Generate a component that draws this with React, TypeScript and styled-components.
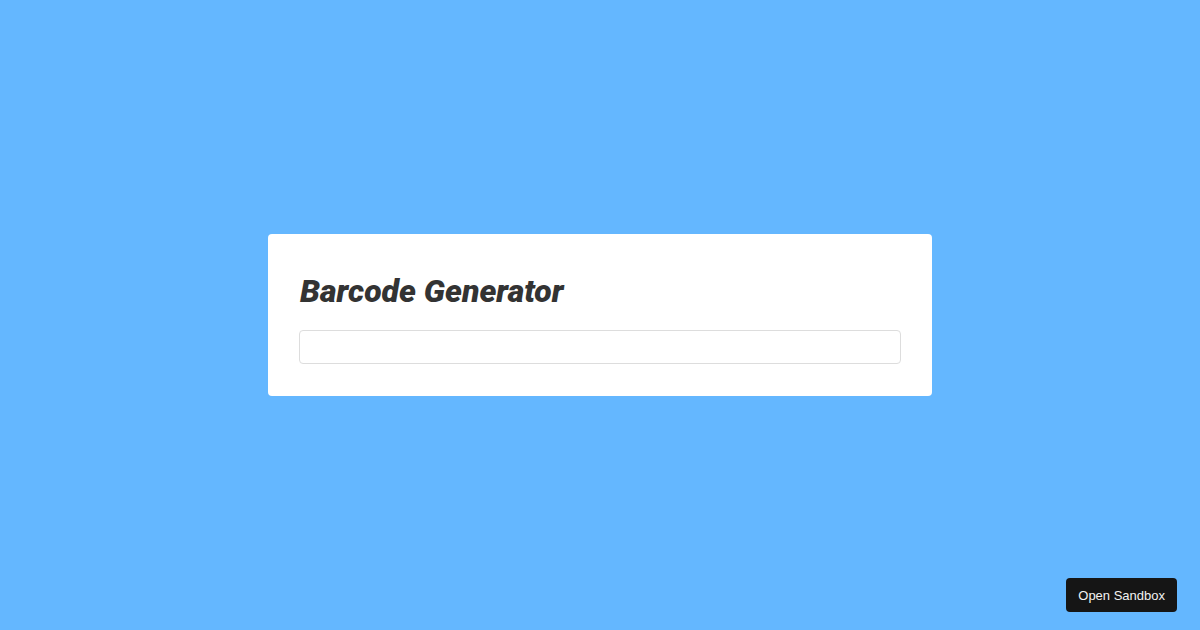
import styled, { createGlobalStyle } from "styled-components";

const GlobalStyle = createGlobalStyle`
    html, body {
        margin: 0;
        padding: 0;
        height: 100%;
    }

    body {
        background: #64b7ff;
        font-family: "Roboto", "Liberation Sans", sans-serif;
    }

    #root {
        height: 100%;
    }
`

const Page = styled.div`
    min-height: 100vh;
    display: flex;
    align-items: center;
    justify-content: center;
    position: relative;
`

const Card = styled.div`
    width: 664px;
    box-sizing: border-box;
    padding: 36px 31px 32px 31px;
    background: #ffffff;
    border-radius: 4px;
`

const Title = styled.h1`
    margin: 0 0 18px 1px;
    font-family: "Roboto", "Liberation Sans", sans-serif;
    font-style: italic;
    font-weight: 900;
    font-size: 32px;
    line-height: 42px;
    color: #333333;
`

const Input = styled.input`
    display: block;
    width: 100%;
    height: 34px;
    box-sizing: border-box;
    border: 1px solid #dddddd;
    border-radius: 4px;
    padding: 0 10px;
    font-size: 14px;
    outline: none;
`

const SandboxButton = styled.button`
    position: absolute;
    right: 23px;
    bottom: 18px;
    height: 34px;
    padding: 0 12px;
    border: none;
    border-radius: 4px;
    background: #151515;
    color: #f2f2f2;
    font-family: "Liberation Sans", Arial, sans-serif;
    font-size: 13px;
    cursor: pointer;
`

export default function App() {
    return (
        <>
            <GlobalStyle />
            <Page>
                <Card>
                    <Title>Barcode Generator</Title>
                    <Input type="text" />
                </Card>
                <SandboxButton>Open Sandbox</SandboxButton>
            </Page>
        </>
    )
}
